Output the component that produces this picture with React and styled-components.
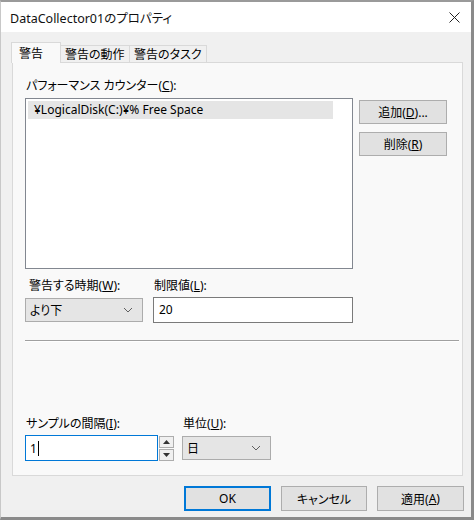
import React from 'react'
import styled, { createGlobalStyle } from 'styled-components'

const GlobalStyle = createGlobalStyle`
  * { box-sizing: border-box; }
  body {
    margin: 0;
    background: #f0f0f0;
    font-family: "Noto Sans", "Noto Sans CJK JP", sans-serif;
    font-size: 12px;
    font-feature-settings: "palt";
    color: #000;
  }
`

const Window = styled.div`
  width: 474px;
  height: 520px;
  display: flex;
  flex-direction: column;
  background: #f0f0f0;
  border-top: 2px solid #9a9a9a;
  border-left: 1px solid #c8c8c8;
  border-right: 3px solid #8a8a8a;
  border-bottom: 3px solid #8a8a8a;
`

const TitleBar = styled.div`
  height: 30px;
  flex-shrink: 0;
  display: flex;
  align-items: center;
  justify-content: space-between;
  background: #fff;
  padding: 0 11px 0 9px;
  font-size: 12.5px;
  color: #111;
`

const Body = styled.div`
  flex: 1;
  display: flex;
  flex-direction: column;
  padding: 10px 0 0 10px;
`

const TabStrip = styled.div`
  display: flex;
  align-items: flex-end;
  height: 21px;
  position: relative;
  z-index: 1;
  margin-bottom: -1px;
`

const Tab = styled.div`
  flex-shrink: 0;
  white-space: nowrap;
  height: ${(p) => (p.$active ? '21px' : '18px')};
  padding: 0 ${(p) => (p.$active ? '7px' : '4px')};
  display: flex;
  align-items: center;
  background: ${(p) => (p.$active ? '#f9f9f9' : '#f0f0f0')};
  border: 1px solid #d9d9d9;
  border-bottom: ${(p) => (p.$active ? 'none' : '1px solid #d9d9d9')};
  border-left: ${(p) => (p.$active ? '1px solid #d9d9d9' : 'none')};
  min-width: ${(p) => p.$w}px;
  font-size: 12px;
`

const Panel = styled.div`
  width: 451px;
  margin-left: 1px;
  height: 414px;
  background: #f9f9f9;
  border: 1px solid #d9d9d9;
  padding: 15px 0 0 12px;
  display: flex;
  flex-direction: column;
`

const Label = styled.div`
  height: 16px;
  line-height: 16px;
  margin-bottom: ${(p) => p.$mb || 3}px;
  padding-left: ${(p) => p.$pl || 1}px;
  white-space: nowrap;
`

const CounterRow = styled.div`
  display: flex;
  gap: 6px;
`

const ListBox = styled.div`
  width: 328px;
  height: 171px;
  background: #fff;
  border: 1px solid #828790;
  padding: 2px;
`

const ListItem = styled.div`
  height: 18px;
  width: 305px;
  line-height: 18px;
  padding-left: 6px;
  background: ${(p) => (p.$selected ? '#e5e5e5' : 'transparent')};
`

const SideButtons = styled.div`
  display: flex;
  flex-direction: column;
  gap: 8px;
  padding-top: 2px;
`

const Button = styled.button`
  width: ${(p) => p.$w || 88}px;
  height: ${(p) => p.$h || 24}px;
  background: #e1e1e1;
  border: ${(p) => (p.$default ? '2px solid #0078d7' : '1px solid #adadad')};
  font: inherit;
  font-size: 12px;
  color: #000;
  padding: 0;
  display: flex;
  align-items: center;
  justify-content: center;
`

const FieldRow = styled.div`
  display: flex;
  gap: ${(p) => p.$gap}px;
  margin-top: ${(p) => p.$mt}px;
`

const Field = styled.div`
  display: flex;
  flex-direction: column;
`

const Combo = styled.div`
  width: ${(p) => p.$w}px;
  height: 24px;
  background: #e5e5e5;
  border: 1px solid #acacac;
  display: flex;
  align-items: center;
  justify-content: space-between;
  padding: 0 9px 0 4px;
`

const TextBox = styled.div`
  width: ${(p) => p.$w}px;
  height: ${(p) => p.$h || 26}px;
  background: #fff;
  border: 1px solid ${(p) => (p.$focus ? '#0078d7' : '#7a7a7a')};
  display: flex;
  align-items: ${(p) => (p.$top ? 'flex-start' : 'center')};
  padding: ${(p) => (p.$top ? '3px 0 0 5px' : '0 0 0 4px')};
`

const Caret = styled.span`
  display: inline-block;
  width: 1px;
  height: 15px;
  background: #000;
  margin-left: 1px;
`

const Spin = styled.div`
  display: flex;
  align-items: center;
`

const SpinButtons = styled.div`
  display: flex;
  flex-direction: column;
  gap: 1px;
  margin-left: 1px;
`

const SpinButton = styled.div`
  width: 15px;
  height: 12px;
  background: #f0f0f0;
  border: 1px solid #adadad;
  display: flex;
  align-items: center;
  justify-content: center;
`

const Separator = styled.div`
  width: 434px;
  height: 2px;
  margin-top: 17px;
  border-top: 1px solid #a0a0a0;
  border-bottom: 1px solid #fff;
`

const Footer = styled.div`
  display: flex;
  justify-content: flex-end;
  gap: 10px;
  padding: 10px 7px 0 0;
`

const Chevron = () => (
  <svg width="10" height="6" viewBox="0 0 10 6">
    <path d="M1 1 L5 5 L9 1" fill="none" stroke="#606060" strokeWidth="1" />
  </svg>
)

const Close = () => (
  <svg width="11" height="11" viewBox="0 0 11 11">
    <path d="M0.5 0.5 L10.5 10.5 M10.5 0.5 L0.5 10.5" stroke="#222" strokeWidth="1" />
  </svg>
)

const Tri = ({ up }) => (
  <svg width="7" height="4" viewBox="0 0 7 4">
    <path d={up ? 'M0 4 L3.5 0 L7 4 Z' : 'M0 0 L3.5 4 L7 0 Z'} fill="#333" />
  </svg>
)

const App = () => {
  return (
    <>
      <GlobalStyle />
      <Window>
        <TitleBar>
          <span>DataCollector01のプロパティ</span>
          <Close />
        </TitleBar>
        <Body>
          <TabStrip>
            <Tab $active $w={50}>警告</Tab>
            <Tab $w={69}>警告の動作</Tab>
            <Tab $w={73}>警告のタスク</Tab>
          </TabStrip>
          <Panel>
            <Label $mb={4}>
              パフォーマンス カウンター(<u>C</u>):
            </Label>
            <CounterRow>
              <ListBox>
                <ListItem $selected>¥LogicalDisk(C:)¥% Free Space</ListItem>
              </ListBox>
              <SideButtons>
                <Button>
                  追加(<u>D</u>)...
                </Button>
                <Button>
                  削除(<u>R</u>)
                </Button>
              </SideButtons>
            </CounterRow>
            <FieldRow $gap={10} $mt={9}>
              <Field>
                <Label $pl={4} $mb={4}>
                  警告する時期(<u>W</u>):
                </Label>
                <Combo $w={118}>
                  <span>より下</span>
                  <Chevron />
                </Combo>
              </Field>
              <Field>
                <Label $pl={0} $mb={3}>
                  制限値(<u>L</u>):
                </Label>
                <TextBox $w={200} $top>
                  20
                </TextBox>
              </Field>
            </FieldRow>
            <Separator />
            <FieldRow $gap={8} $mt={74}>
              <Field>
                <Label $pl={1} $mb={3}>
                  サンプルの間隔(<u>I</u>):
                </Label>
                <Spin>
                  <TextBox $w={133} $focus>
                    1<Caret />
                  </TextBox>
                  <SpinButtons>
                    <SpinButton>
                      <Tri up />
                    </SpinButton>
                    <SpinButton>
                      <Tri />
                    </SpinButton>
                  </SpinButtons>
                </Spin>
              </Field>
              <Field>
                <Label $pl={0} $mb={4}>
                  単位(<u>U</u>):
                </Label>
                <Combo $w={89}>
                  <span>日</span>
                  <Chevron />
                </Combo>
              </Field>
            </FieldRow>
          </Panel>
          <Footer>
            <Button $w={87} $h={25} $default>
              OK
            </Button>
            <Button $w={86} $h={25}>
              キャンセル
            </Button>
            <Button $w={87} $h={25}>
              適用(<u>A</u>)
            </Button>
          </Footer>
        </Body>
      </Window>
    </>
  )
}

export default App
